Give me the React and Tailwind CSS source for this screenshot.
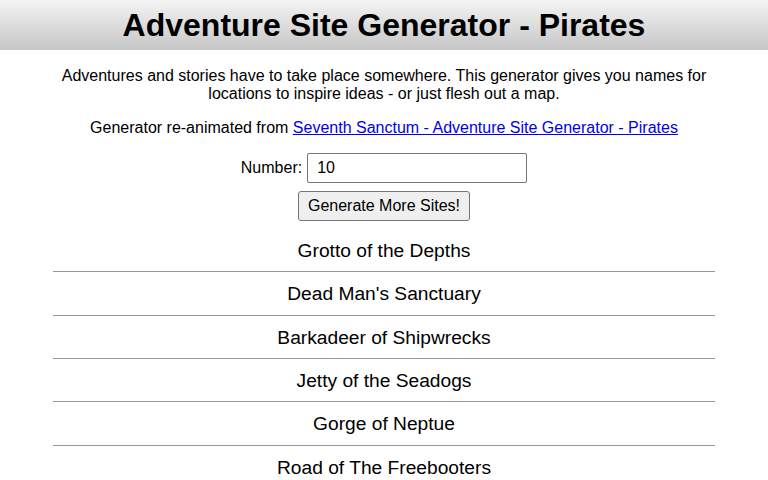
import { useState } from "react";

const sites = [
  "Grotto of the Depths",
  "Dead Man's Sanctuary",
  "Barkadeer of Shipwrecks",
  "Jetty of the Seadogs",
  "Gorge of Neptue",
  "Road of The Freebooters",
  "Cove of the Buccaneers",
  "Isle of Skulls",
  "Harbor of the Kraken",
  "Reef of Lost Souls",
];

export default function App() {
  const [count, setCount] = useState("10");

  return (
    <div className="min-h-screen bg-white text-black font-['Liberation_Sans',Arial,sans-serif]">
      {/* Header */}
      <div className="h-[50px] flex items-center justify-center bg-gradient-to-b from-[#f4f4f4] to-[#c6c6c6]">
        <h1 className="text-[32px] font-bold leading-[37px]">Adventure Site Generator - Pirates</h1>
      </div>

      <div className="w-[662px] mx-auto text-center">
        <p className="mt-[17px] text-base leading-[18px]">
          Adventures and stories have to take place somewhere. This generator gives you names for
          locations to inspire ideas - or just flesh out a map.
        </p>
        <p className="mt-4 text-base leading-[18px]">
          Generator re-animated from{" "}
          <a href="#" className="text-[#0000ee] underline">
            Seventh Sanctum - Adventure Site Generator - Pirates
          </a>
        </p>

        {/* Form */}
        <div className="mt-4 flex items-center justify-center gap-[5px]">
          <label className="text-base">Number:</label>
          <input
            type="text"
            value={count}
            onChange={(e) => setCount(e.target.value)}
            className="w-[220px] h-[30px] px-[9px] text-base border border-[#767676] rounded-[2px] outline-none"
          />
        </div>
        <div className="mt-2 flex justify-center">
          <button className="h-[30px] px-[9px] text-base bg-[#efefef] border border-[#767676] rounded-[3px]">
            Generate More Sites!
          </button>
        </div>

        {/* Results */}
        <div className="mt-[8px]">
          {sites.map((site) => (
            <div
              key={site}
              className="pt-[11px] pb-[9px] text-[19.2px] leading-[22.33px] border-b border-[#999]"
            >
              {site}
            </div>
          ))}
        </div>
      </div>
    </div>
  );
}
